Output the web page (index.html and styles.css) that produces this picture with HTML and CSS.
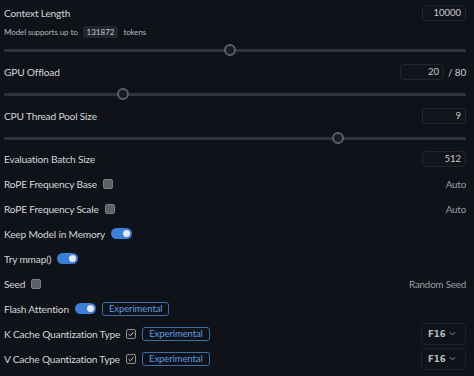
FILE: index.html
```html
<!DOCTYPE html>
<html>
<head>
<meta charset="utf-8">
<link rel="stylesheet" href="styles.css">
</head>
<body>
<div class="panel">
  <div class="row label-row">
    <span class="label">Context Length</span>
    <span class="num-input">10000</span>
  </div>
  <div class="note">Model supports up to <span class="code">131872</span> tokens</div>
  <div class="slider"><div class="track"></div><div class="thumb" style="left: 49%"></div></div>

  <div class="row label-row">
    <span class="label">GPU Offload</span>
    <span class="right-group"><span class="num-input">20</span><span class="of">/ 80</span></span>
  </div>
  <div class="slider"><div class="track"></div><div class="thumb" style="left: 25.8%"></div></div>

  <div class="row label-row">
    <span class="label">CPU Thread Pool Size</span>
    <span class="num-input">9</span>
  </div>
  <div class="slider last"><div class="track"></div><div class="thumb" style="left: 72.2%"></div></div>

  <div class="row">
    <span class="label">Evaluation Batch Size</span>
    <span class="num-input">512</span>
  </div>
  <div class="row">
    <span class="left"><span class="label">RoPE Frequency Base</span><span class="checkbox"></span></span>
    <span class="muted">Auto</span>
  </div>
  <div class="row">
    <span class="left"><span class="label">RoPE Frequency Scale</span><span class="checkbox"></span></span>
    <span class="muted">Auto</span>
  </div>
  <div class="row">
    <span class="left"><span class="label">Keep Model in Memory</span><span class="toggle"><span class="knob"></span></span></span>
  </div>
  <div class="row">
    <span class="left"><span class="label">Try mmap()</span><span class="toggle"><span class="knob"></span></span></span>
  </div>
  <div class="row">
    <span class="left"><span class="label">Seed</span><span class="checkbox"></span></span>
    <span class="muted">Random Seed</span>
  </div>
  <div class="row">
    <span class="left"><span class="label">Flash Attention</span><span class="toggle"><span class="knob"></span></span><span class="badge">Experimental</span></span>
  </div>
  <div class="row">
    <span class="left"><span class="label">K Cache Quantization Type</span><span class="checkbox checked"><svg viewBox="0 0 10 10" width="8" height="8"><path d="M2 5.2 L4.2 7.2 L8 2.8" fill="none" stroke="#c9ccd1" stroke-width="1.2"/></svg></span><span class="badge">Experimental</span></span>
    <span class="select">F16<svg viewBox="0 0 10 10" width="9" height="9"><path d="M2 3.5 L5 6.5 L8 3.5" fill="none" stroke="#8d929a" stroke-width="1.1"/></svg></span>
  </div>
  <div class="row">
    <span class="left"><span class="label">V Cache Quantization Type</span><span class="checkbox checked"><svg viewBox="0 0 10 10" width="8" height="8"><path d="M2 5.2 L4.2 7.2 L8 2.8" fill="none" stroke="#c9ccd1" stroke-width="1.2"/></svg></span><span class="badge">Experimental</span></span>
    <span class="select">F16<svg viewBox="0 0 10 10" width="9" height="9"><path d="M2 3.5 L5 6.5 L8 3.5" fill="none" stroke="#8d929a" stroke-width="1.1"/></svg></span>
  </div>
</div>
</body>
</html>
```
FILE: styles.css
```css
html, body {
  margin: 0;
  padding: 0;
  background: #0f1218;
}
body {
  width: 474px;
  height: 376px;
  overflow: hidden;
  font-family: "Lato", "Open Sans", sans-serif;
  font-size: 10px;
  letter-spacing: -0.2px;
  color: #d3d5d9;
}
.panel {
  padding: 2px 8px 0 4px;
}
.row {
  display: flex;
  align-items: center;
  justify-content: space-between;
  height: 25px;
}
.label-row {
  height: 22px;
}
.left {
  display: flex;
  align-items: center;
}
.label {
  white-space: nowrap;
  font-size: 10.2px;
}
.num-input {
  box-sizing: border-box;
  width: 44px;
  height: 16px;
  border: 1px solid #22262d;
  border-radius: 4px;
  background: #11141a;
  text-align: right;
  padding: 0 4px;
  font-size: 9.5px;
  line-height: 14px;
  letter-spacing: 0;
  color: #c9ccd1;
}
.right-group {
  display: flex;
  align-items: center;
}
.of {
  margin-left: 4px;
  font-size: 10px;
  color: #c9ccd1;
}
.note {
  height: 15px;
  display: flex;
  align-items: center;
  font-size: 8px;
  letter-spacing: -0.1px;
  color: #b6b9bf;
}
.code {
  display: inline-block;
  margin: 0 5px 0 5px;
  padding: 1px 4px;
  background: #21252c;
  border-radius: 3px;
  font-size: 8px;
  letter-spacing: 0;
  color: #c3c6cb;
}
.slider {
  position: relative;
  height: 22px;
}
.slider.last {
  margin-bottom: -3px;
}
.track {
  position: absolute;
  left: 0;
  right: 0;
  top: 10px;
  height: 3px;
  border-radius: 2px;
  background: #30343b;
}
.thumb {
  position: absolute;
  top: 5px;
  width: 12px;
  height: 12px;
  margin-left: -6px;
  box-sizing: border-box;
  border: 2px solid #5b5f67;
  border-radius: 50%;
  background: #191c22;
}
.checkbox {
  box-sizing: border-box;
  width: 10px;
  height: 10px;
  margin-left: 6px;
  border: 1px solid #7a7d83;
  border-radius: 2px;
  background: #5d6067;
  display: inline-flex;
  align-items: center;
  justify-content: center;
}
.checkbox.checked {
  background: #13161c;
  border-color: #8b8e94;
}
.toggle {
  position: relative;
  display: inline-block;
  width: 21px;
  height: 11px;
  margin-left: 6px;
  border-radius: 6px;
  background: #3c7fd8;
}
.knob {
  position: absolute;
  right: 2px;
  top: 2px;
  width: 7px;
  height: 7px;
  border-radius: 50%;
  background: #e6e8ec;
}
.badge {
  margin-left: 6px;
  box-sizing: border-box;
  height: 14px;
  padding: 0 6px;
  border: 1px solid #3b6ea8;
  border-radius: 3px;
  font-size: 9.5px;
  line-height: 12px;
  letter-spacing: -0.1px;
  color: #5f9be0;
}
.muted {
  font-size: 9.8px;
  color: #9a9ea5;
}
.select {
  box-sizing: border-box;
  width: 45px;
  height: 22px;
  border: 1px solid #1f232a;
  border-radius: 4px;
  background: #0f1218;
  display: flex;
  align-items: center;
  justify-content: space-between;
  padding: 0 8px 0 6px;
  font-family: "DejaVu Sans", sans-serif;
  font-weight: bold;
  font-size: 8.5px;
  letter-spacing: 0;
  color: #b4b8be;
}
```
